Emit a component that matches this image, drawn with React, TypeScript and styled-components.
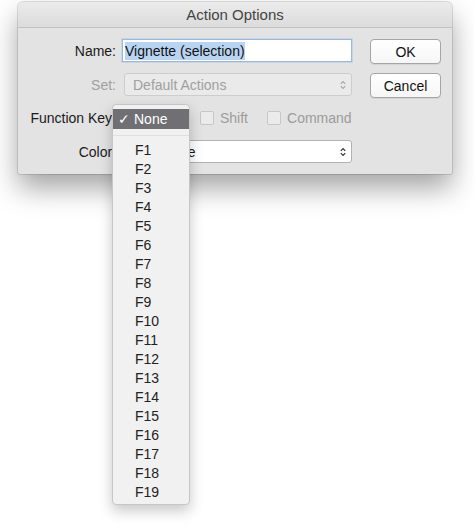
import React from "react";
import styled, { createGlobalStyle } from "styled-components";

const GlobalStyle = createGlobalStyle`
	html, body {
		margin: 0;
		padding: 0;
		background: #ffffff;
	}
	body {
		font-family: "Liberation Sans", Arial, sans-serif;
		font-size: 14px;
		color: #1a1a1a;
	}
`;

const Page = styled.div`
	width: 474px;
	height: 524px;
	padding: 2px 0 0 18px;
	box-sizing: border-box;
	overflow: hidden;
`;

const Dialog = styled.div`
	position: relative;
	width: 434px;
	background: #e3e3e3;
	border-radius: 5px 5px 2px 2px;
	box-shadow: 0 14px 28px rgba(0, 0, 0, 0.36), 0 0 0 1px rgba(0, 0, 0, 0.12);
`;

const TitleBar = styled.div`
	height: 25px;
	display: flex;
	align-items: center;
	justify-content: center;
	font-size: 15px;
	color: #444;
	background: linear-gradient(#ebebeb, #dcdcdc);
	border-bottom: 1px solid #c2c2c2;
	border-radius: 5px 5px 0 0;
`;

const Body = styled.div`
	display: flex;
	padding: 11px 11px 11px 10px;
	gap: 18px;
`;

const Form = styled.div`
	display: grid;
	grid-template-columns: 88px 230px;
	grid-template-rows: 23px 23px 22px 23px;
	column-gap: 6px;
	row-gap: 11px;
	align-items: center;
`;

const Label = styled.div<{ $disabled?: boolean }>`
	text-align: right;
	white-space: nowrap;
	color: ${(p) => (p.$disabled ? "#a0a0a0" : "#1a1a1a")};
`;

const TextField = styled.div`
	height: 23px;
	box-sizing: border-box;
	background: #ffffff;
	border: 1px solid #9fb7d3;
	box-shadow: 0 0 0 1px #c4d6ec;
	display: flex;
	align-items: center;
	padding-left: 2px;
`;

const Selection = styled.span`
	background: #b9d4f2;
	color: #111;
	padding: 1px 0;
`;

const Select = styled.div<{ $disabled?: boolean; $indent?: number }>`
	position: relative;
	height: 23px;
	margin-left: 2px;
	box-sizing: border-box;
	background: ${(p) => (p.$disabled ? "#eaeaea" : "#ffffff")};
	border: 1px solid ${(p) => (p.$disabled ? "#cdcdcd" : "#b2b2b2")};
	border-radius: 3px;
	display: flex;
	align-items: center;
	padding-left: ${(p) => p.$indent ?? 8}px;
	color: ${(p) => (p.$disabled ? "#a0a0a0" : "#1a1a1a")};
`;

const Arrows = styled.svg<{ $disabled?: boolean }>`
	position: absolute;
	right: 5px;
	top: 50%;
	transform: translateY(-50%);
	color: ${(p) => (p.$disabled ? "#a8a8a8" : "#333")};
`;

const KeyRow = styled.div`
	display: flex;
	align-items: center;
	gap: 19px;
	height: 22px;
	white-space: nowrap;
`;

const PopupStub = styled.div`
	flex: 0 0 59px;
	height: 20px;
`;

const Check = styled.label`
	flex-shrink: 0;
	display: flex;
	align-items: center;
	gap: 6px;
	color: #9c9c9c;
`;

const Box = styled.span`
	width: 14px;
	height: 14px;
	box-sizing: border-box;
	border: 1px solid #c7c7c7;
	border-radius: 2px;
	background: #ebebeb;
`;

const Buttons = styled.div`
	display: flex;
	flex-direction: column;
	gap: 9px;
`;

const Button = styled.div`
	width: 71px;
	height: 25px;
	box-sizing: border-box;
	display: flex;
	align-items: center;
	justify-content: center;
	background: linear-gradient(#ffffff, #f6f6f6);
	border: 1px solid #a5a5a5;
	border-radius: 4px;
	box-shadow: 0 1px 0 rgba(0, 0, 0, 0.06);
	color: #111;
`;

const Menu = styled.div`
	position: absolute;
	left: 94px;
	top: 102px;
	width: 78px;
	box-sizing: border-box;
	padding: 4px 0 2px;
	background: #f1f1f1;
	border: 1px solid #c6c6c6;
	border-radius: 4px;
	box-shadow: 0 6px 14px rgba(0, 0, 0, 0.22);
	z-index: 2;
`;

const MenuChecked = styled.div`
	height: 20px;
	display: flex;
	align-items: center;
	padding-left: 5px;
	gap: 4px;
	background: #6f6f74;
	color: #ffffff;
`;

const Separator = styled.div`
	height: 12px;
	display: flex;
	align-items: center;
	&::after {
		content: "";
		flex: 1;
		height: 1px;
		background: #e0e0e0;
	}
`;

const MenuItem = styled.div`
	height: 19px;
	line-height: 19px;
	padding-left: 22px;
	color: #222;
`;

const UpDown = ({ disabled }: { disabled?: boolean }) => (
	<Arrows $disabled={disabled} width="6" height="10" viewBox="0 0 6 10">
		<path d="M0.8 3.8 L3 1.6 L5.2 3.8" fill="none" stroke="currentColor" strokeWidth="1.2" />
		<path d="M0.8 6.2 L3 8.4 L5.2 6.2" fill="none" stroke="currentColor" strokeWidth="1.2" />
	</Arrows>
);

const keys = Array.from({ length: 19 }, (_, i) => `F${i + 1}`);

export default function App() {
	return (
		<>
			<GlobalStyle />
			<Page>
				<Dialog>
					<TitleBar>Action Options</TitleBar>
					<Body>
						<Form>
							<Label>Name:</Label>
							<TextField>
								<Selection>Vignette (selection)</Selection>
							</TextField>

							<Label $disabled>Set:</Label>
							<Select $disabled>
								Default Actions
								<UpDown disabled />
							</Select>

							<Label>Function Key:</Label>
							<KeyRow>
								<PopupStub />
								<Check>
									<Box />
									Shift
								</Check>
								<Check>
									<Box />
									Command
								</Check>
							</KeyRow>

							<Label>Color:</Label>
							<Select $indent={37}>
								None
								<UpDown />
							</Select>
						</Form>
						<Buttons>
							<Button>OK</Button>
							<Button>Cancel</Button>
						</Buttons>
					</Body>

					<Menu>
						<MenuChecked>
							<span>✓</span>
							<span>None</span>
						</MenuChecked>
						<Separator />
						{keys.map((k) => (
							<MenuItem key={k}>{k}</MenuItem>
						))}
					</Menu>
				</Dialog>
			</Page>
		</>
	);
}
